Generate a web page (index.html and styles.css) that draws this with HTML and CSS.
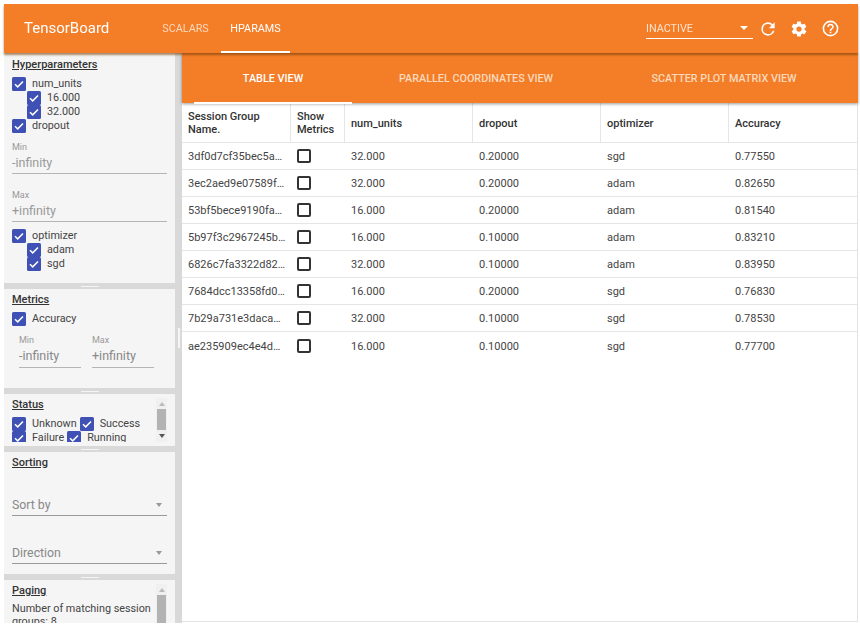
FILE: index.html
```html
<!DOCTYPE html>
<html lang="en">
<head>
<meta charset="utf-8">
<title>TensorBoard</title>
<link rel="stylesheet" href="styles.css">
</head>
<body>
<div class="app">
  <header class="toolbar">
    <div class="brand">TensorBoard</div>
    <nav class="nav">
      <div class="nav-item">SCALARS</div>
      <div class="nav-item active">HPARAMS</div>
    </nav>
    <div class="toolbar-right">
      <div class="run-select"><span>INACTIVE</span><i class="caret caret-white"></i></div>
      <svg class="tool-icon refresh" viewBox="0 0 24 24"><path d="M17.65 6.35A7.96 7.96 0 0 0 12 4a8 8 0 1 0 7.73 10h-2.08A6 6 0 1 1 12 6c1.66 0 3.14.69 4.22 1.78L13 11h7V4l-2.35 2.35z"/></svg>
      <svg class="tool-icon gear" viewBox="0 0 24 24"><path d="M19.43 12.98c.04-.32.07-.64.07-.98s-.03-.66-.07-.98l2.11-1.65a.5.5 0 0 0 .12-.64l-2-3.46a.5.5 0 0 0-.61-.22l-2.49 1a7.3 7.3 0 0 0-1.69-.98l-.38-2.65A.49.49 0 0 0 14 2h-4a.49.49 0 0 0-.49.42l-.38 2.65c-.61.25-1.17.59-1.69.98l-2.49-1a.5.5 0 0 0-.61.22l-2 3.46a.49.49 0 0 0 .12.64l2.11 1.65c-.04.32-.07.65-.07.98s.03.66.07.98l-2.11 1.65a.5.5 0 0 0-.12.64l2 3.46c.12.22.39.3.61.22l2.49-1c.52.4 1.08.73 1.69.98l.38 2.65c.03.24.24.42.49.42h4c.25 0 .46-.18.49-.42l.38-2.65c.61-.25 1.17-.59 1.69-.98l2.49 1c.23.09.49 0 .61-.22l2-3.46a.5.5 0 0 0-.12-.64l-2.11-1.65zM12 15.5a3.5 3.5 0 1 1 0-7 3.5 3.5 0 0 1 0 7z"/></svg>
      <svg class="tool-icon help" viewBox="0 0 24 24"><path d="M11 18h2v-2h-2v2zm1-16a10 10 0 1 0 0 20 10 10 0 0 0 0-20zm0 18a8 8 0 1 1 0-16 8 8 0 0 1 0 16zm0-14a4 4 0 0 0-4 4h2a2 2 0 1 1 4 0c0 2-3 1.75-3 5h2c0-2.25 3-2.5 3-5a4 4 0 0 0-4-4z"/></svg>
    </div>
  </header>
  <div class="content">
    <aside class="sidebar">
      <section class="panel panel-hp">
        <h3 class="panel-title">Hyperparameters</h3>
        <label class="check top"><i class="box"></i>num_units</label>
        <label class="check sub"><i class="box"></i>16.000</label>
        <label class="check sub"><i class="box"></i>32.000</label>
        <label class="check top"><i class="box"></i>dropout</label>
        <div class="field"><div class="field-label">Min</div><div class="field-value">-infinity</div></div>
        <div class="field"><div class="field-label">Max</div><div class="field-value">+infinity</div></div>
        <label class="check top"><i class="box"></i>optimizer</label>
        <label class="check sub"><i class="box"></i>adam</label>
        <label class="check sub"><i class="box"></i>sgd</label>
      </section>
      <div class="splitter"></div>
      <section class="panel panel-metrics">
        <h3 class="panel-title">Metrics</h3>
        <label class="check top"><i class="box"></i>Accuracy</label>
        <div class="range">
          <div class="field thin"><div class="field-label">Min</div><div class="field-value">-infinity</div></div>
          <div class="field thin"><div class="field-label">Max</div><div class="field-value">+infinity</div></div>
        </div>
      </section>
      <div class="splitter"></div>
      <section class="panel panel-status scroll-panel">
        <div class="scroll-body">
          <h3 class="panel-title">Status</h3>
          <div class="status-row"><label class="check top"><i class="box"></i>Unknown</label><label class="check top"><i class="box"></i>Success</label></div>
          <div class="status-row"><label class="check top"><i class="box"></i>Failure</label><label class="check top"><i class="box"></i>Running</label></div>
        </div>
        <div class="scrollbar"><i class="arrow-up"></i><div class="thumb thumb-status"></div><i class="arrow-down"></i></div>
      </section>
      <div class="splitter"></div>
      <section class="panel panel-sorting">
        <h3 class="panel-title">Sorting</h3>
        <div class="select first"><span>Sort by</span><i class="caret"></i></div>
        <div class="select"><span>Direction</span><i class="caret"></i></div>
      </section>
      <div class="splitter"></div>
      <section class="panel panel-paging scroll-panel">
        <div class="scroll-body">
          <h3 class="panel-title">Paging</h3>
          <p class="paging-text">Number of matching session groups: 8</p>
        </div>
        <div class="scrollbar"><i class="arrow-up"></i><div class="thumb thumb-paging"></div></div>
      </section>
    </aside>
    <div class="divider"></div>
    <main class="main">
      <div class="tabs">
        <div class="tab active">TABLE VIEW</div>
        <div class="tab">PARALLEL COORDINATES VIEW</div>
        <div class="tab">SCATTER PLOT MATRIX VIEW</div>
      </div>
      <div class="table">
        <div class="row head">
          <div class="cell c1">Session Group Name.</div>
          <div class="cell c2">Show Metrics</div>
          <div class="cell c3">num_units</div>
          <div class="cell c3">dropout</div>
          <div class="cell c3">optimizer</div>
          <div class="cell c3">Accuracy</div>
        </div>
        <div class="row"><div class="cell c1">3df0d7cf35bec5a…</div><div class="cell c2"><i class="empty"></i></div><div class="cell c3">32.000</div><div class="cell c3">0.20000</div><div class="cell c3">sgd</div><div class="cell c3">0.77550</div></div>
        <div class="row"><div class="cell c1">3ec2aed9e07589f…</div><div class="cell c2"><i class="empty"></i></div><div class="cell c3">32.000</div><div class="cell c3">0.20000</div><div class="cell c3">adam</div><div class="cell c3">0.82650</div></div>
        <div class="row"><div class="cell c1">53bf5bece9190fa…</div><div class="cell c2"><i class="empty"></i></div><div class="cell c3">16.000</div><div class="cell c3">0.20000</div><div class="cell c3">adam</div><div class="cell c3">0.81540</div></div>
        <div class="row"><div class="cell c1">5b97f3c2967245b…</div><div class="cell c2"><i class="empty"></i></div><div class="cell c3">16.000</div><div class="cell c3">0.10000</div><div class="cell c3">adam</div><div class="cell c3">0.83210</div></div>
        <div class="row"><div class="cell c1">6826c7fa3322d82…</div><div class="cell c2"><i class="empty"></i></div><div class="cell c3">32.000</div><div class="cell c3">0.10000</div><div class="cell c3">adam</div><div class="cell c3">0.83950</div></div>
        <div class="row"><div class="cell c1">7684dcc13358fd0…</div><div class="cell c2"><i class="empty"></i></div><div class="cell c3">16.000</div><div class="cell c3">0.20000</div><div class="cell c3">sgd</div><div class="cell c3">0.76830</div></div>
        <div class="row"><div class="cell c1">7b29a731e3daca…</div><div class="cell c2"><i class="empty"></i></div><div class="cell c3">32.000</div><div class="cell c3">0.10000</div><div class="cell c3">sgd</div><div class="cell c3">0.78530</div></div>
        <div class="row last"><div class="cell c1">ae235909ec4e4d…</div><div class="cell c2"><i class="empty"></i></div><div class="cell c3">16.000</div><div class="cell c3">0.10000</div><div class="cell c3">sgd</div><div class="cell c3">0.77700</div></div>
      </div>
    </main>
  </div>
</div>
</body>
</html>
```
FILE: styles.css
```css
* { box-sizing: border-box; }
html, body { margin: 0; padding: 0; background: #fff; overflow: hidden; }
body { font-family: Roboto, "Liberation Sans", sans-serif; color: #333; }
.app { width: 854px; height: 619px; margin: 4px 0 0 4px; display: flex; flex-direction: column; filter: blur(.35px); }

.toolbar { height: 49px; flex: none; background: #f47d27; display: flex; align-items: stretch; color: #fff; box-shadow: 0 2px 2px rgba(110,60,10,.6); position: relative; z-index: 2; }
.brand { font-size: 15px; line-height: 49px; width: 146px; padding-left: 20px; flex: none; }
.nav { display: flex; }
.nav-item { font-size: 10.8px; line-height: 49px; width: 71px; text-align: center; color: #fbd9bd; }
.nav-item.active { color: #fff; width: 69px; box-shadow: inset 0 -2px 0 #fff; }
.toolbar-right { margin-left: auto; display: flex; align-items: center; padding-right: 18px; }
.run-select { width: 107px; height: 21px; border-bottom: 1px solid #fff; font-size: 10.8px; line-height: 15px; display: flex; justify-content: space-between; padding: 3px 2px 0 0; color: #fde3cd; }
.caret { display: block; width: 0; height: 0; border-style: solid; border-color: #999 transparent transparent; border-width: 4px 4px 0; }
.caret-white { border-top-color: #fff; margin: 5px 3px 0 0; }
.tool-icon { fill: #fff; display: block; }
.refresh { width: 20px; height: 20px; margin-left: 5px; }
.gear { width: 18px; height: 18px; margin-left: 12px; }
.help { width: 19px; height: 19px; margin-left: 13px; }

.content { flex: 1; display: flex; min-height: 0; background: #d9d9d9; }
.sidebar { width: 171px; flex: none; display: flex; flex-direction: column; color: #444; font-size: 10.8px; }
.divider { width: 7px; flex: none; display: flex; justify-content: center; align-items: center; }
.divider::after { content: ""; width: 2px; height: 20px; background: #f5f5f5; }
.panel { background: #f5f5f5; padding: 0 8px; overflow: hidden; flex: none; }
.splitter { height: 6px; flex: none; background: #d9d9d9; display: flex; justify-content: center; align-items: center; }
.splitter::after { content: ""; width: 18px; height: 1px; background: #f5f5f5; }
.panel-hp { height: 230px; padding-top: 5px; }
.panel-metrics { height: 99px; padding-top: 4px; }
.panel-status { height: 52px; padding-bottom: 4px; }
.panel-sorting { height: 122px; padding-top: 4px; }
.panel-paging { flex: 1; min-height: 0; }
.panel-title { font-size: 11px; line-height: 13px; font-weight: 500; text-decoration: underline; color: #333; margin: 0 0 6px; }

.check { display: flex; align-items: center; height: 14px; line-height: 14px; white-space: nowrap; }
.box { width: 14px; height: 14px; flex: none; margin-right: 6px; border-radius: 1.5px; background-color: #3f51b5; background-image: url("data:image/svg+xml,%3Csvg xmlns='http://www.w3.org/2000/svg' viewBox='0 0 14 14'%3E%3Cpath d='M3 7.3l2.7 2.6L11 4.5' fill='none' stroke='%23fff' stroke-width='1.5'/%3E%3C/svg%3E"); }
.sub { margin-left: 15px; }

.field { color: #999; margin-bottom: 7px; }
.field-label { font-size: 9px; line-height: 12px; padding-top: 8px; }
.field-value { font-size: 12.5px; line-height: 20px; border-bottom: 1px solid #b5b5b5; height: 21px; }
.range { display: flex; gap: 11px; padding-left: 7px; }
.field.thin { width: 62px; margin-bottom: 0; }
.field.thin .field-value { color: #888; height: 22px; }

.scroll-panel { display: flex; }
.scroll-body { flex: 1; min-width: 0; padding-top: 4px; overflow: hidden; }
.scrollbar { width: 11px; flex: none; margin-top: 4px; background: #f0f0f0; display: flex; flex-direction: column; align-items: center; }
.arrow-up, .arrow-down { display: block; width: 0; height: 0; border-style: solid; margin: 4px 0 3px; }
.arrow-up { border-width: 0 3px 4px; border-color: transparent transparent #bbb; }
.arrow-down { border-width: 4px 3px 0; border-color: #555 transparent transparent; margin-top: 4px; }
.thumb { width: 9px; background: #b3b3b3; flex: none; }
.thumb-status { height: 21px; }
.thumb-paging { height: 30px; }
.status-row { display: flex; gap: 3px; }

.select { height: 24px; border-bottom: 1px solid #999; display: flex; justify-content: space-between; align-items: center; font-size: 12.3px; color: #888; padding: 2px 5px 0 0; }
.select.first { margin-top: 23px; margin-bottom: 24px; }
.select .caret { border-width: 4px 3.5px 0; }

.paging-text { margin: 0; font-size: 10.8px; line-height: 13px; color: #444; }
.panel-paging .panel-title { margin-bottom: 5px; }

.main { flex: 1; min-width: 0; background: #fff; display: flex; flex-direction: column; }
.tabs { height: 50px; flex: none; background: #f47d27; display: grid; grid-template-columns: 170px 248px 248px; color: #fbd9bd; font-size: 10.8px; font-weight: 500; box-shadow: 0 1px 3px rgba(0,0,0,.4); position: relative; }
.tab { text-align: center; line-height: 51px; }
.tab:first-child { margin-left: 12px; }
.tab.active { color: #fff; box-shadow: inset 0 -2px 0 #fff; }

.table { flex: 1; display: flex; flex-direction: column; font-size: 11px; color: #444; border-right: 1px solid #e4e4e4; border-bottom: 1px solid #e4e4e4; margin-bottom: 1px; }
.row { display: flex; height: 27px; border-bottom: 1px solid #e6e6e6; }
.row.last { border-bottom: 0; }
.row.head { height: 40px; font-weight: 500; line-height: 13px; color: #333; }
.cell { display: flex; align-items: center; padding: 1px 0 0 6px; white-space: nowrap; }
.head .cell { white-space: normal; border-right: 1px solid #e6e6e6; padding-top: 0; }
.head .cell.c3 { padding-top: 2px; }
.head .cell:last-child { border-right: 0; }
.c1 { width: 109px; }
.c2 { width: 54px; }
.c3 { width: 128px; }
.empty { display: block; width: 14px; height: 14px; border: 2px solid #333; border-radius: 2px; margin-top: -1px; }
```
